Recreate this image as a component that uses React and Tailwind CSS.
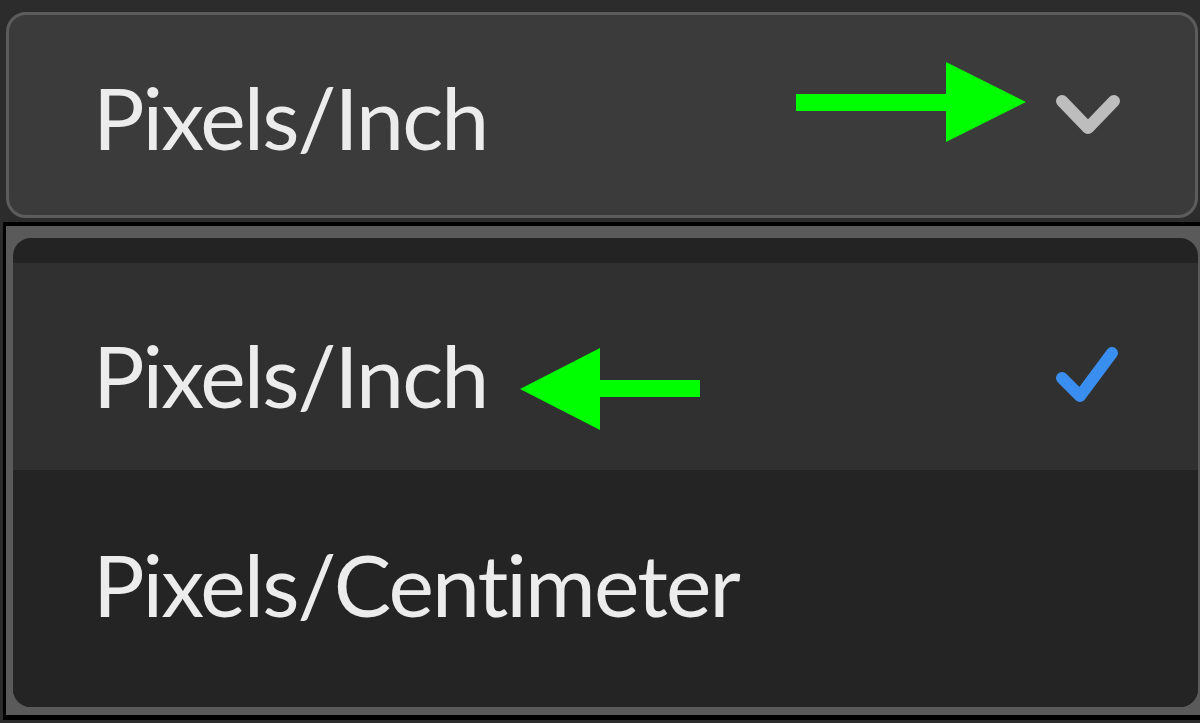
import React from 'react';

const font = { fontFamily: 'Lato, "Open Sans", sans-serif' };

const Chevron = () => (
  <svg width="70" height="50" viewBox="0 0 70 50" className="shrink-0">
    <path d="M9 9 L35 36 L61 9" fill="none" stroke="#bdbdbd" strokeWidth="12" strokeLinecap="round" strokeLinejoin="round" />
  </svg>
);

const Check = () => (
  <svg width="66" height="62" viewBox="0 0 66 62" className="shrink-0">
    <path d="M8 34 L26 52 L58 9" fill="none" stroke="#3a8ef0" strokeWidth="12" strokeLinecap="round" strokeLinejoin="round" />
  </svg>
);

const ArrowRight = () => (
  <svg width="230" height="80" viewBox="0 0 230 80">
    <rect x="0" y="32" width="152" height="17" fill="#00ff00" />
    <polygon points="150,0 230,40 150,80" fill="#00ff00" />
  </svg>
);

const ArrowLeft = () => (
  <svg width="180" height="82" viewBox="0 0 180 82">
    <polygon points="0,41 80,0 80,82" fill="#00ff00" />
    <rect x="78" y="32" width="102" height="17" fill="#00ff00" />
  </svg>
);

export default function App() {
  return (
    <div className="relative w-[1200px] h-[723px] overflow-hidden bg-[#2c2c2c] text-[#ececec]" style={font}>
      <div className="pt-[12px]">
        {/* select field */}
        <div className="relative ml-[6px] w-[1192px] h-[206px] rounded-[20px] border-[3px] border-[#5c5c5c] bg-[#3b3b3b] flex items-center justify-between pl-[84px] pr-[72px] pt-[3px]">
          <span className="text-[86px] leading-none tracking-[-0.022em]">Pixels/Inch</span>
          <Chevron />
          <div className="absolute left-[787px] top-[47px]">
            <ArrowRight />
          </div>
        </div>

        {/* menu */}
        <div className="mt-[4px] ml-[3px] h-[498px] border-t-[4px] border-l-[3px] border-b-[5px] border-black bg-[#5a5a5a] pt-[12px] pl-[7px] pb-[8px]">
          <div className="w-[1185px] h-full rounded-[18px] overflow-hidden bg-[#232323] flex flex-col">
            <div className="h-[25px] shrink-0" />
            <div className="relative h-[207px] shrink-0 bg-[#303030] flex items-center justify-between pl-[80px] pr-[78px] pt-[16px]">
              <span className="text-[86px] leading-none tracking-[-0.022em]">Pixels/Inch</span>
              <Check />
              <div className="absolute left-[507px] top-[85px]">
                <ArrowLeft />
              </div>
            </div>
            <div className="flex-1 bg-[#242424] flex items-center pl-[80px] pb-[10px]">
              <span className="text-[86px] leading-none tracking-[-0.022em]">Pixels/Centimeter</span>
            </div>
          </div>
        </div>
      </div>
    </div>
  );
}
